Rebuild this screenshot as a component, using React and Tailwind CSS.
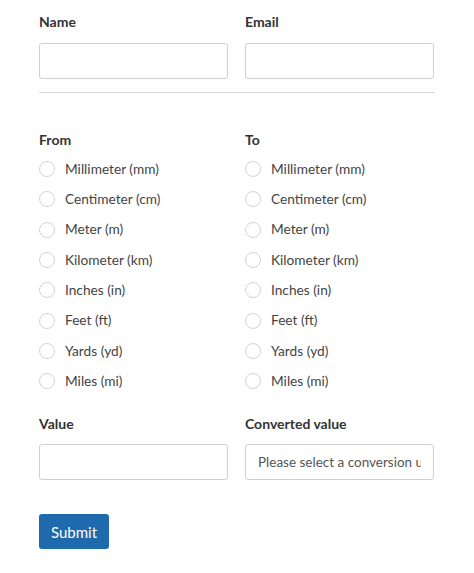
import { useState } from 'react';

const units = [
  'Millimeter (mm)',
  'Centimeter (cm)',
  'Meter (m)',
  'Kilometer (km)',
  'Inches (in)',
  'Feet (ft)',
  'Yards (yd)',
  'Miles (mi)',
];

function RadioGroup({ label, name, value, onChange }) {
  return (
    <div className="flex flex-col">
      <div className="h-5 leading-5 text-[14px] font-bold text-[#333]">{label}</div>
      <div className="mt-1 flex flex-col">
        {units.map((u) => (
          <label key={u} className="flex h-[30.3px] items-center gap-[10px] cursor-pointer">
            <input
              type="radio"
              name={name}
              checked={value === u}
              onChange={() => onChange(u)}
              className="peer sr-only"
            />
            <span className="h-[16px] w-[16px] rounded-full border border-[#d4d4d4] bg-white peer-checked:border-[5px] peer-checked:border-[#1f69ad]" />
            <span className="text-[13.7px] text-[#444]">{u}</span>
          </label>
        ))}
      </div>
    </div>
  );
}

export default function App() {
  const [from, setFrom] = useState('');
  const [to, setTo] = useState('');

  return (
    <div className="min-h-screen bg-white" style={{ fontFamily: 'Lato, "Noto Sans", sans-serif' }}>
      <form className="w-[395px] ml-[39px] pt-3" onSubmit={(e) => e.preventDefault()}>
        <div className="grid grid-cols-2 gap-x-[17px]">
          <div className="flex flex-col">
            <div className="h-5 leading-5 text-[14px] font-bold text-[#333]">Name</div>
            <input className="mt-[11px] h-[36px] rounded-[3px] border border-[#cfcfcf] px-3 text-[14px] outline-none" />
          </div>
          <div className="flex flex-col">
            <div className="h-5 leading-5 text-[14px] font-bold text-[#333]">Email</div>
            <input className="mt-[11px] h-[36px] rounded-[3px] border border-[#cfcfcf] px-3 text-[14px] outline-none" />
          </div>
        </div>

        <div className="mt-[13px] h-px bg-[#d6d6d6]" />

        <div className="mt-[37px] grid grid-cols-2 gap-x-[17px]">
          <RadioGroup label="From" name="from" value={from} onChange={setFrom} />
          <RadioGroup label="To" name="to" value={to} onChange={setTo} />
        </div>

        <div className="mt-[18px] grid grid-cols-2 gap-x-[17px]">
          <div className="flex flex-col">
            <div className="h-5 leading-5 text-[14px] font-bold text-[#333]">Value</div>
            <input className="mt-[10px] h-[36px] rounded-[3px] border border-[#cfcfcf] px-3 text-[14px] outline-none" />
          </div>
          <div className="flex flex-col">
            <div className="h-5 leading-5 text-[14px] font-bold text-[#333]">Converted value</div>
            <input
              readOnly
              placeholder="Please select a conversion unit"
              className="mt-[10px] h-[36px] rounded-[3px] border border-[#cfcfcf] px-3 text-[13.5px] text-[#555] placeholder:text-[#555] outline-none"
            />
          </div>
        </div>

        <button
          type="submit"
          className="mt-[34px] h-[35px] w-[70px] rounded-[3px] bg-[#1f69ad] text-[15px] text-white"
        >
          Submit
        </button>
      </form>
    </div>
  );
}
